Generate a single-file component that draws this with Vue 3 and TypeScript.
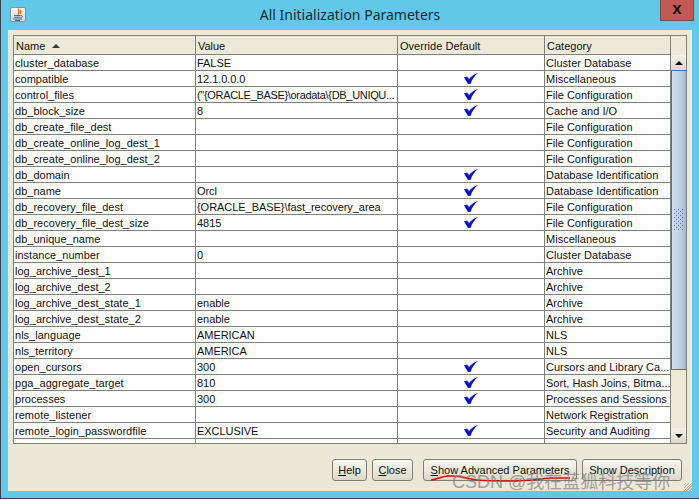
<script setup lang="ts">
interface Row { n: string; v: string; o: boolean; c: string }
const rows: Row[] = [
  { n: 'cluster_database', v: 'FALSE', o: false, c: 'Cluster Database' },
  { n: 'compatible', v: '12.1.0.0.0', o: true, c: 'Miscellaneous' },
  { n: 'control_files', v: '("{ORACLE_BASE}\\oradata\\{DB_UNIQU...', o: true, c: 'File Configuration' },
  { n: 'db_block_size', v: '8', o: true, c: 'Cache and I/O' },
  { n: 'db_create_file_dest', v: '', o: false, c: 'File Configuration' },
  { n: 'db_create_online_log_dest_1', v: '', o: false, c: 'File Configuration' },
  { n: 'db_create_online_log_dest_2', v: '', o: false, c: 'File Configuration' },
  { n: 'db_domain', v: '', o: true, c: 'Database Identification' },
  { n: 'db_name', v: 'Orcl', o: true, c: 'Database Identification' },
  { n: 'db_recovery_file_dest', v: '{ORACLE_BASE}\\fast_recovery_area', o: true, c: 'File Configuration' },
  { n: 'db_recovery_file_dest_size', v: '4815', o: true, c: 'File Configuration' },
  { n: 'db_unique_name', v: '', o: false, c: 'Miscellaneous' },
  { n: 'instance_number', v: '0', o: false, c: 'Cluster Database' },
  { n: 'log_archive_dest_1', v: '', o: false, c: 'Archive' },
  { n: 'log_archive_dest_2', v: '', o: false, c: 'Archive' },
  { n: 'log_archive_dest_state_1', v: 'enable', o: false, c: 'Archive' },
  { n: 'log_archive_dest_state_2', v: 'enable', o: false, c: 'Archive' },
  { n: 'nls_language', v: 'AMERICAN', o: false, c: 'NLS' },
  { n: 'nls_territory', v: 'AMERICA', o: false, c: 'NLS' },
  { n: 'open_cursors', v: '300', o: true, c: 'Cursors and Library Ca...' },
  { n: 'pga_aggregate_target', v: '810', o: true, c: 'Sort, Hash Joins, Bitma...' },
  { n: 'processes', v: '300', o: true, c: 'Processes and Sessions' },
  { n: 'remote_listener', v: '', o: false, c: 'Network Registration' },
  { n: 'remote_login_passwordfile', v: 'EXCLUSIVE', o: true, c: 'Security and Auditing' },
  { n: '', v: '', o: false, c: '' },
]
</script>

<template>
  <div class="window">
    <div class="titlebar">
      <div class="appicon">
        <svg width="14" height="13" viewBox="0 0 14 13">
          <path d="M8 0.5C6 2.5 9.5 3.5 7 6.5M10 2C8.8 3.4 10.6 4.2 9.2 6" stroke="#e0701e" stroke-width="1.4" fill="none" />
          <path d="M3 7.5h6.5M3 9.2h6.5M2 11h9M4 12.5h5" stroke="#46688e" stroke-width="1" fill="none" />
          <path d="M10 7.5c2 0 2 2-.5 2.4" stroke="#46688e" stroke-width="1" fill="none" />
        </svg>
      </div>
      <div class="title">All Initialization Parameters</div>
      <div class="close">x</div>
    </div>
    <div class="content">
      <div class="tablewrap">
        <div class="tablecol">
          <div class="row head">
            <div class="cell c1">Name <span class="sort"></span></div>
            <div class="cell c2">Value</div>
            <div class="cell c3">Override Default</div>
            <div class="cell c4">Category</div>
          </div>
          <div class="body">
            <div v-for="(r, i) in rows" :key="i" class="row">
              <div class="cell c1">{{ r.n }}</div>
              <div class="cell c2" :class="{ tight: r.v.length > 33 }">{{ r.v }}</div>
              <div class="cell c3 mid">
                <svg v-if="r.o" class="check" width="14" height="11" viewBox="0 0 14 11">
                  <path d="M0 4.5 L3 3.5 L5 6 C7 3.5 10 1 14 0 C10.5 2.8 8.3 6 6.5 11 L4 11 Z" fill="#1212c4" />
                </svg>
              </div>
              <div class="cell c4">{{ r.c }}</div>
            </div>
          </div>
        </div>
        <div class="scrollcol">
          <div class="corner"></div>
          <div class="sbtn"><span class="up"></span></div>
          <div class="track">
            <div class="thumb">
              <svg class="grip" width="10" height="22" viewBox="0 0 10 22">
                <pattern id="gripdots" width="4" height="4" patternUnits="userSpaceOnUse">
                  <rect x="0" y="0" width="1" height="1" fill="#4a6fb5" />
                  <rect x="2" y="2" width="1" height="1" fill="#4a6fb5" />
                </pattern>
                <rect width="10" height="22" fill="url(#gripdots)" />
              </svg>
            </div>
          </div>
          <div class="sbtn"><span class="down"></span></div>
        </div>
      </div>
      <div class="buttons">
        <button class="btn help"><u>H</u>elp</button>
        <button class="btn close-btn"><u>C</u>lose</button>
        <button class="btn wide"><u>S</u>how Advanced Parameters</button>
        <button class="btn desc">Show Description</button>
      </div>
      <div class="grip-corner"></div>
    </div>
    <svg class="scribble" width="150" height="14" viewBox="0 0 150 14">
      <path d="M1 10 C8 9 12 6 18 6 L23 6 C32 6 38 9 47 10 C60 11 70 11 80 11 C90 11 96 10 103 10 C110 9 116 8 123 8 L140 8" stroke="#f00000" stroke-width="1.6" fill="none" />
    </svg>
    <div class="watermark">CSDN @我在蓝狐科技等你</div>
  </div>
</template>

<style>
html, body { margin: 0; padding: 0; overflow: hidden; background: #fff; }
</style>

<style scoped>
.window {
  width: 699px;
  height: 499px;
  box-sizing: border-box;
  position: relative;
  background: #62c8ea;
  border-left: 1px solid #3a4046;
  border-bottom: 1px solid #3a4046;
  display: flex;
  flex-direction: column;
  padding: 0 7px 7px 7px;
  font-family: "Liberation Sans", Arial, sans-serif;
  font-size: 11px;
  color: #111;
  overflow: hidden;
}
.titlebar {
  height: 30px;
  flex: none;
  display: flex;
  position: relative;
  justify-content: center;
  align-items: center;
}
.appicon {
  position: absolute;
  left: 2px;
  top: 7px;
  width: 14px;
  height: 13px;
  background: linear-gradient(#f6f6f6, #cfd6de);
  border: 1px solid #8a9099;
  border-radius: 2px;
}
.title {
  font-family: "Noto Sans", sans-serif;
  font-size: 14px;
  color: #1a2a33;
  padding-bottom: 2px;
}
.close {
  position: absolute;
  right: -2px;
  top: 0;
  width: 34px;
  height: 21px;
  background: #c05a52;
  border: 1px solid #7a4a48;
  border-top: none;
  color: #111;
  font: bold 17px/17px "Liberation Sans", sans-serif;
  text-align: center;
  box-sizing: border-box;
}
.content {
  flex: 1;
  background: #ebe8d8;
  padding: 5px 5px 0 5px;
  display: flex;
  flex-direction: column;
  position: relative;
  min-height: 0;
}
.tablewrap {
  display: flex;
  height: 409px;
  border: 1px solid #808080;
  box-sizing: border-box;
  flex: none;
}
.tablecol { width: 656px; flex: none; display: flex; flex-direction: column; overflow: hidden; }
.body { background: #fff; flex: 1; overflow: hidden; }
.row { display: flex; height: 16px; box-sizing: border-box; border-bottom: 1px solid #808080; }
.row.head {
  height: 19px;
  background: #ece9d8;
  border-bottom: 1px solid #808080;
}
.cell {
  box-sizing: border-box;
  border-right: 1px solid #808080;
  padding-left: 1px;
  line-height: 17px;
  white-space: nowrap;
  overflow: hidden;
  letter-spacing: 0.02px;
}
.cell.c2 { letter-spacing: -0.05px; }
.cell.c2.tight { letter-spacing: -0.32px; }
.head .cell { line-height: 20px; padding-left: 2px; }
.c1 { width: 182px; }
.c2 { width: 202px; }
.c3 { width: 147px; }
.c4 { width: 125px; border-right: none; }
.mid { display: flex; justify-content: center; align-items: center; overflow: visible; }
.check { margin-right: 2px; flex: none; }
.sort {
  display: inline-block;
  width: 0;
  height: 0;
  margin-left: 3px;
  border-left: 4px solid transparent;
  border-right: 4px solid transparent;
  border-bottom: 4px solid #33414d;
  vertical-align: 2px;
}
.scrollcol { flex: 1; display: flex; flex-direction: column; border-left: 1px solid #808080; background: #ece9d8; }
.corner { height: 19px; flex: none; border-bottom: none; box-sizing: border-box; }
.sbtn {
  height: 15px;
  flex: none;
  background: linear-gradient(#f4f2e8, #dcd9c8);
  box-sizing: border-box;
  display: flex;
  align-items: center;
  justify-content: center;
}
.up, .down { width: 0; height: 0; border-left: 4px solid transparent; border-right: 4px solid transparent; }
.up { border-bottom: 4px solid #111; }
.down { border-top: 4px solid #111; }
.track { flex: 1; background: #ece9d8; }
.thumb {
  height: 300px;
  box-sizing: border-box;
  border: 1px solid #4a72b8;
  border-right: none;
  background: linear-gradient(90deg, #d0e0ee, #bccfe4 60%, #a5b4c8);
  display: flex;
  align-items: center;
  justify-content: center;
}
.buttons {
  display: flex;
  padding: 15px 0 0 319px;
  gap: 5px;
}
.btn {
  height: 22px;
  font: 11px "Liberation Sans", Arial, sans-serif;
  padding: 0;
  background: linear-gradient(#f8f7f0, #dcd9c8);
  border: 1px solid #7f7f78;
  border-radius: 3px;
  color: #111;
  flex: none;
}
.help { width: 35px; }
.close-btn { width: 41px; }
.wide { width: 154px; margin-left: 5px; }
.desc { width: 100px; }
.grip-corner {
  position: absolute;
  right: 0;
  bottom: 0;
  width: 8px;
  height: 8px;
  background: repeating-linear-gradient(135deg, transparent 0 1px, #b5b2a4 1px 2px);
}
.scribble { position: absolute; left: 429px; top: 470px; }
.watermark {
  position: absolute;
  left: 451px;
  top: 471px;
  font-family: "Liberation Sans", "Noto Sans CJK SC", sans-serif;
  font-size: 18px;
  line-height: 22px;
  color: rgba(125, 125, 130, 0.7);
  white-space: nowrap;
}
</style>
